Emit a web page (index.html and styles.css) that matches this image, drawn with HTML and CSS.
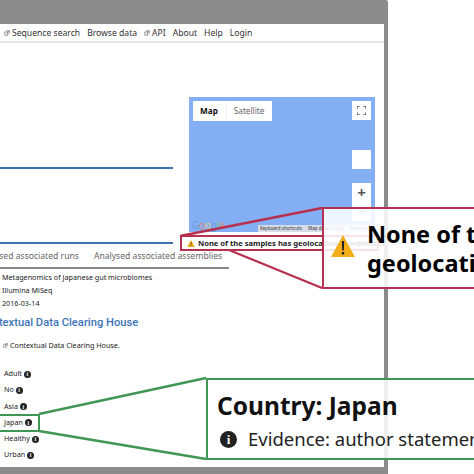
FILE: index.html
```html
<!DOCTYPE html>
<html lang="en">
<head>
    <meta charset="UTF-8">
    <title>Sample geolocation and country annotation</title>
    <link rel="stylesheet" href="styles.css">
</head>
<body>
    <div class="figure">
        <div class="window">
            <nav class="topnav">
                <a><svg class="ext" viewBox="0 0 8 8"><path d="M1 2.5h4v4.5h-4zM3 1h4v4M7 1l-3.500 3.500"/></svg>Sequence search</a>
                <a>Browse data</a>
                <a><svg class="ext" viewBox="0 0 8 8"><path d="M1 2.5h4v4.5h-4zM3 1h4v4M7 1l-3.500 3.500"/></svg>API</a>
                <a>About</a>
                <a>Help</a>
                <a>Login</a>
            </nav>
            <div class="summary">
                <div class="summary-left">
                    <div class="blue-rule first"></div>
                    <div class="blue-rule"></div>
                </div>
                <div class="summary-right">
                    <div class="map">
                        <div class="map-type"><span class="active">Map</span><span>Satellite</span></div>
                        <div class="map-btn fullscreen"><svg viewBox="0 0 10 10"><path d="M0 3v-3h3M7 0h3v3M10 7v3h-3M3 10h-3v-3"/></svg></div>
                        <div class="map-btn pegman"></div>
                        <div class="map-btn zoom"><span>+</span><span class="minus">−</span></div>
                        <div class="google"><b class="g-b">G</b><b class="g-r">o</b><b class="g-y">o</b><b class="g-b">g</b><b class="g-g">l</b><b class="g-r">e</b></div>
                        <div class="attribution"><span>Keyboard shortcuts</span><span>Map data ©2022</span><span>Terms of Use</span></div>
                    </div>
                    <div class="geo-warning"><svg class="warn" viewBox="0 0 24 22"><path class="warn-bg" d="M12 0l12 22h-24z"/><path class="warn-mark" d="M10.800 7h2.400l-.4 8h-1.600zM10.800 16.500h2.400v2.500h-2.400z"/></svg>None of the samples has geolocation coordinates.</div>
                </div>
            </div>
            <div class="tabs"><span>Analysed associated runs</span><span>Analysed associated assemblies</span></div>
            <ul class="facts">
                <li>Metagenomics of Japanese gut microbiomes</li>
                <li>Illumina MiSeq</li>
                <li>2016-03-14</li>
            </ul>
            <h2 class="section-title">Contextual Data Clearing House</h2>
            <p class="section-link"><svg class="ext" viewBox="0 0 8 8"><path d="M1 2.5h4v4.500h-4zM3 1h4v4M7 1l-3.500 3.500"/></svg>Contextual Data Clearing House.</p>
            <ul class="tags">
                <li>Adult <i class="info">i</i></li>
                <li>No <i class="info">i</i></li>
                <li>Asia <i class="info">i</i></li>
                <li>Japan <i class="info">i</i></li>
                <li>Healthy <i class="info">i</i></li>
                <li>Urban <i class="info">i</i></li>
            </ul>
        </div>

        <!-- callouts sit on top of the screenshot -->
        <svg class="leaders" viewBox="0 0 474 474">
            <path class="red" d="M180 236L322 208M229 250L322 288"/>
            <path class="green" d="M39 414L206 378M39 431L206 459"/>
        </svg>
        <div class="mark mark-red"></div>
        <div class="mark mark-green"></div>
        <div class="callout callout-red">
            <svg class="warn-big" viewBox="0 0 24 22"><path class="warn-bg" d="M12 0l12 22h-24z"/><path class="warn-mark" d="M10.800 6h2.400l-.4 9.500h-1.600zM10.800 17h2.400v2.500h-2.400z"/></svg>
            <div class="callout-title">None of the samples has<br>geolocation coordinates.</div>
        </div>
        <div class="callout callout-green">
            <div class="country">Country: Japan</div>
            <div class="evidence"><i class="info big">i</i>Evidence: author statement</div>
        </div>
    </div>
</body>
</html>
```

FILE: styles.css
```css
body {
    margin: 0;
    font-family: "Noto Sans", Arial, sans-serif;
    color: #222;
}
.figure {
    position: relative;
    width: 474px;
    height: 474px;
    overflow: hidden;
    background-color: #fff;
}
.window {
    box-sizing: border-box;
    width: 388px;
    height: 474px;
    overflow: hidden;
    background-color: #fff;
    border-top: 24px solid #8b8b8b;
    border-right: 4px solid #8b8b8b;
    border-bottom: 7px solid #8b8b8b;
    border-top-right-radius: 3px;
}

/* top nav */
.topnav {
    display: flex;
    gap: 7px;
    align-items: center;
    height: 17px;
    padding-left: 4px;
    border-bottom: 2px solid #e6e6e6;
    font-size: 8.6px;
    color: #333;
}
.topnav a {
    white-space: nowrap;
}
.ext {
    width: 6px;
    height: 6px;
    margin-right: 2px;
    fill: none;
    stroke: #777;
    stroke-width: 1;
}

/* summary + map */
.summary {
    display: flex;
    height: 203px;
}
.summary-left {
    flex: none;
    width: 173px;
    padding-top: 124px;
}
.blue-rule {
    height: 2px;
    background-color: #3f6fb0;
}
.blue-rule.first {
    margin-bottom: 73px;
}
.summary-right {
    flex: none;
    width: 186px;
    margin-left: 16px;
    padding-top: 54px;
}
.map {
    position: relative;
    width: 186px;
    height: 135px;
    background-color: #84aff5;
}
.map-type {
    position: absolute;
    top: 4px;
    left: 4px;
    display: flex;
    height: 20px;
    background-color: #fff;
    font-size: 8.2px;
    line-height: 20px;
    color: #666;
}
.map-type span {
    padding: 0 8px 0 7px;
}
.map-type .active {
    color: #111;
    font-weight: 700;
    border-right: 1px solid #eee;
}
.map-btn {
    position: absolute;
    left: 163px;
    width: 19px;
    height: 19px;
    background-color: #fff;
}
.fullscreen {
    top: 4px;
    display: flex;
    align-items: center;
    justify-content: center;
}
.fullscreen svg {
    width: 9px;
    height: 9px;
    fill: none;
    stroke: #555;
    stroke-width: 1.5;
}
.pegman {
    top: 53px;
}
.zoom {
    top: 86px;
    height: 38px;
    display: flex;
    flex-direction: column;
    align-items: center;
    font-size: 15px;
    line-height: 19px;
    font-weight: 700;
    color: #555;
}
.zoom .minus {
    color: #999;
}
.google {
    position: absolute;
    left: 3px;
    bottom: 0;
    font-size: 10px;
    letter-spacing: -.2px;
}
.google b {
    font-weight: 400;
}
.g-b { color: #6d9bdc; }
.g-r { color: #d98f80; }
.g-y { color: #e0d080; }
.g-g { color: #7fbb8c; }
.attribution {
    position: absolute;
    right: 0;
    bottom: 0;
    display: flex;
    gap: 6px;
    width: 117px;
    height: 7px;
    padding-left: 2px;
    box-sizing: border-box;
    overflow: hidden;
    white-space: nowrap;
    background-color: #d6dde8;
    font-size: 4.6px;
    line-height: 7px;
    color: #333;
}
.geo-warning {
    display: flex;
    align-items: center;
    height: 14px;
    margin-top: 4px;
    margin-left: -2px;
    white-space: nowrap;
    font-size: 7.6px;
    font-weight: 700;
    color: #222;
}
.warn {
    flex: none;
    width: 8px;
    height: 7px;
    margin-right: 3px;
}
.warn-bg {
    fill: #f4ae1a;
}
.warn-mark {
    fill: #222;
}

/* tabs */
.tabs {
    display: flex;
    gap: 15px;
    width: 229px;
    height: 21px;
    border-bottom: 2px solid #888;
    white-space: nowrap;
    font-size: 8.6px;
    line-height: 21px;
    color: #666;
}
.tabs span:first-child {
    margin-left: -23px;
}

/* details */
.facts {
    list-style: none;
    margin: 0;
    padding: 2px 0 0 2px;
    font-size: 7.2px;
    line-height: 13px;
}
.section-title {
    margin: 3px 0 0 -21px;
    font-family: Roboto, Arial, sans-serif;
    font-size: 11.2px;
    line-height: 20px;
    font-weight: 500;
    color: #3d74b8;
    white-space: nowrap;
}
.section-link {
    margin: 6px 0 0 3px;
    font-size: 7.2px;
    line-height: 12px;
}
.section-link .ext {
    width: 5px;
    height: 5px;
}
.tags {
    list-style: none;
    margin: 14px 0 0 4px;
    padding: 0;
    font-size: 7.2px;
    line-height: 16.3px;
}
.info {
    display: inline-flex;
    align-items: center;
    justify-content: center;
    width: 7px;
    height: 7px;
    border-radius: 50%;
    background-color: #222;
    color: #fff;
    font-family: "Liberation Serif", serif;
    font-size: 6px;
    font-style: normal;
    font-weight: 700;
    line-height: 1;
    vertical-align: 0;
}

/* callouts */
.leaders {
    position: absolute;
    top: 0;
    left: 0;
    width: 474px;
    height: 474px;
    fill: none;
    stroke-width: 2.4;
}
.leaders .red {
    stroke: #b8304f;
}
.leaders .green {
    stroke: #3f9655;
}
.mark {
    position: absolute;
    box-sizing: border-box;
    border-width: 2px;
    border-style: solid;
}
.mark-red {
    top: 235px;
    left: 180px;
    width: 199px;
    height: 16px;
    border-color: #b8304f;
}
.mark-green {
    top: 414px;
    left: -2px;
    width: 42px;
    height: 18px;
    border-color: #3f9655;
}
.callout {
    position: absolute;
    box-sizing: border-box;
    height: 82px;
    border-width: 2px;
    border-style: solid;
    border-right: none;
    background-color: rgba(255,255,255,.87);
    white-space: nowrap;
}
.callout-red {
    top: 207px;
    left: 322px;
    width: 152px;
    display: flex;
    align-items: center;
    border-color: #b8304f;
}
.warn-big {
    flex: none;
    width: 24px;
    height: 24px;
    margin: 0 12px 4px 7px;
}
.callout-title {
    padding-top: 2px;
    font-size: 23.5px;
    line-height: 29px;
    font-weight: 700;
    color: #000;
}
.callout-green {
    top: 378px;
    left: 206px;
    width: 268px;
    padding: 10px 0 0 9px;
    border-color: #3f9655;
}
.country {
    font-size: 24.5px;
    line-height: 32px;
    font-weight: 700;
    color: #111;
}
.evidence {
    display: flex;
    align-items: center;
    margin-top: 5px;
    font-size: 18.5px;
    line-height: 24px;
    color: #222;
}
.info.big {
    flex: none;
    width: 17px;
    height: 17px;
    margin: 0 11px 0 3px;
    font-size: 13px;
}
```
